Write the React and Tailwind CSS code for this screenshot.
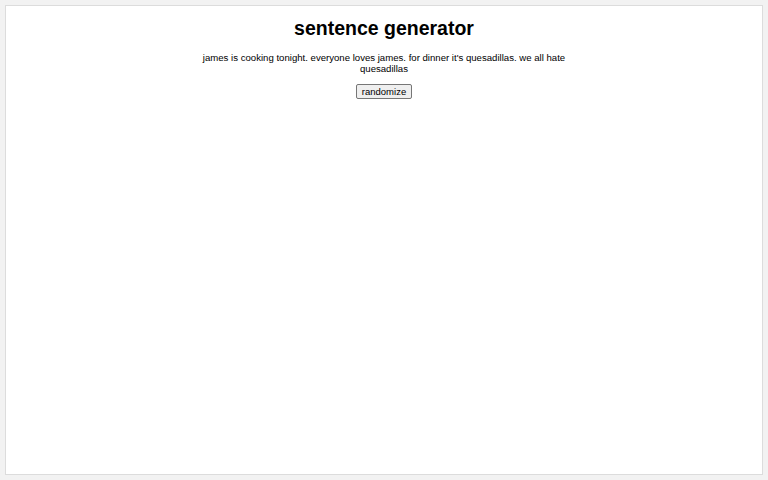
export default function App() {
  return (
    <div className="min-h-[480px] bg-[#f2f2f2] p-[5px] font-['Liberation_Sans',Arial,sans-serif] text-black">
      <div className="h-[470px] border border-[#dcdcdc] bg-white flex flex-col items-center">
        <h1 className="mt-[9px] text-[19.5px] font-bold leading-[26px]">sentence generator</h1>
        <p className="mt-[11px] w-[368px] text-center text-[9.6px] leading-[11px]">
          james is cooking tonight. everyone loves james. for dinner it's quesadillas. we all hate quesadillas
        </p>
        <button className="mt-[10px] border border-[#767676] rounded-[2px] bg-[#efefef] px-[5px] py-[1px] text-[9.5px] leading-[11px]">
          randomize
        </button>
      </div>
    </div>
  )
}
